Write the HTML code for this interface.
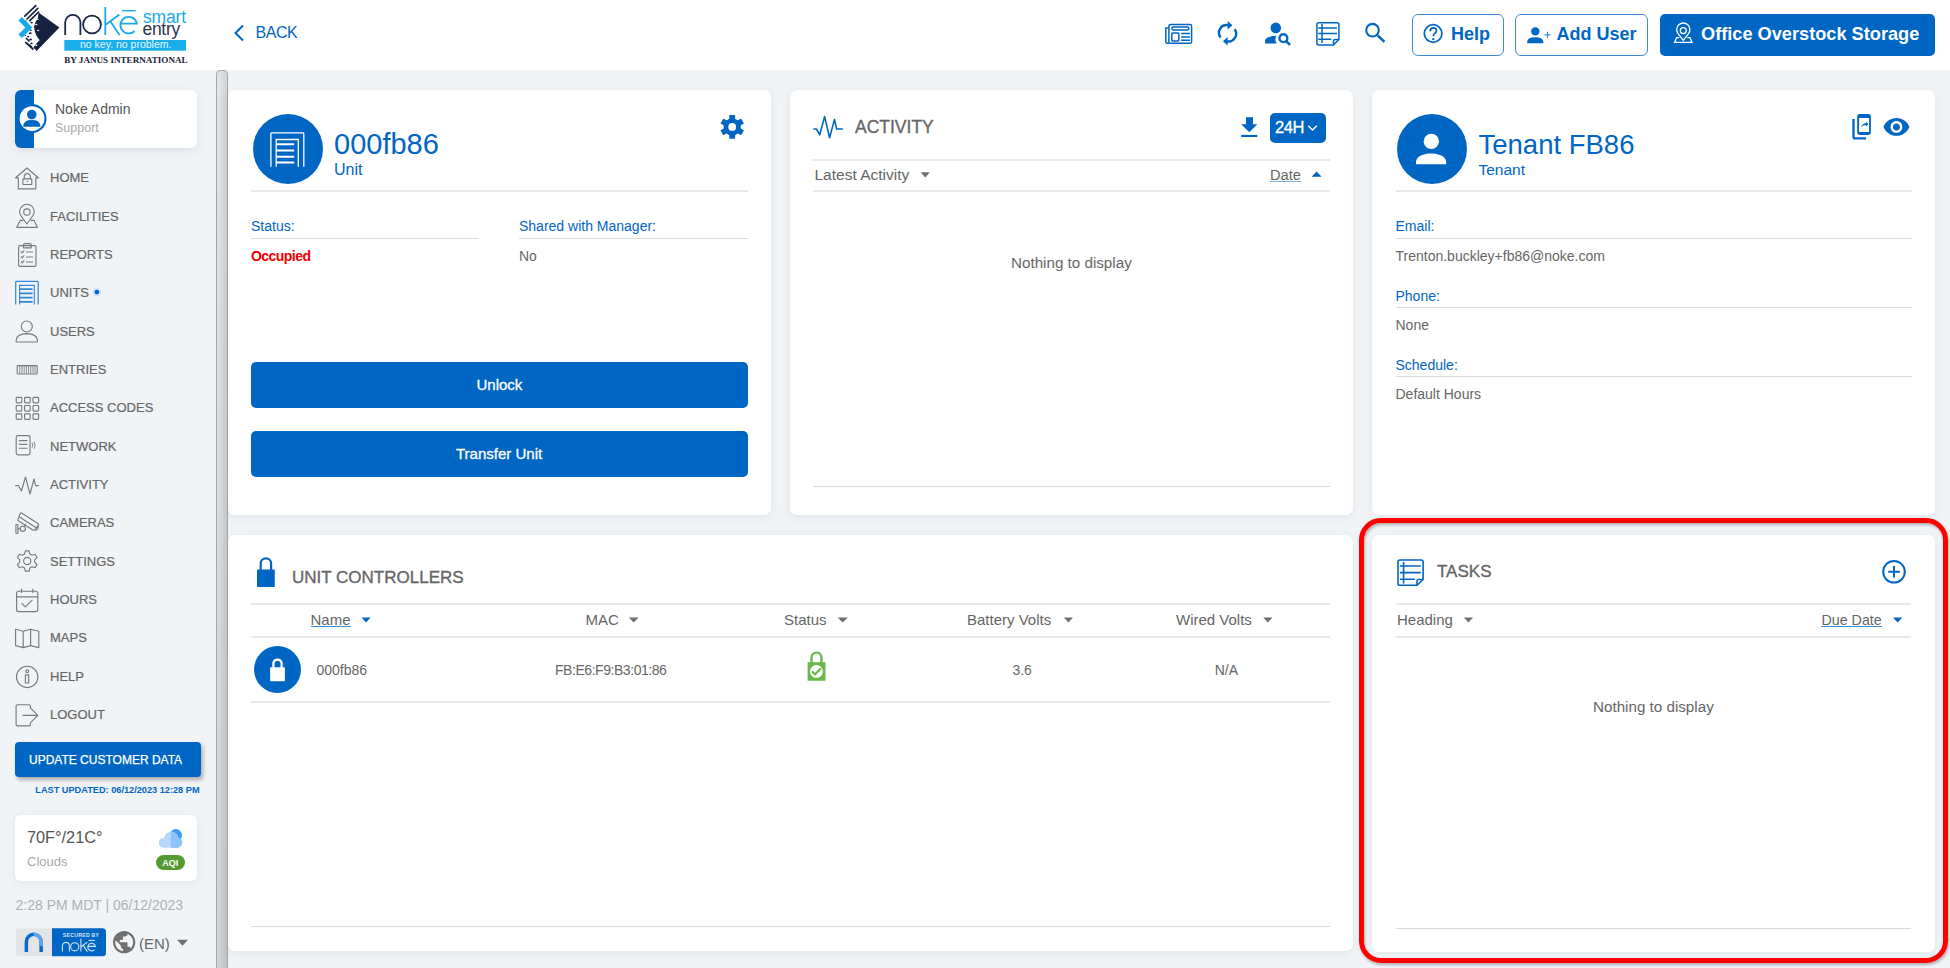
<!DOCTYPE html>
<html><head><meta charset="utf-8">
<style>
*{box-sizing:border-box;margin:0;padding:0}
html,body{width:1950px;height:968px;overflow:hidden;background:#f1f4f7;font-family:"Liberation Sans",sans-serif;color:#666}
.a{position:absolute}
.t{position:absolute;line-height:1;white-space:nowrap}
.card{position:absolute;background:#fff;border-radius:7px;box-shadow:0 2px 8px rgba(40,60,90,.08)}
.hdr{position:absolute;left:0;top:0;width:1950px;height:70px;background:#fff}
.blue{color:#0066c4}
.nav{position:absolute;left:50px;font-size:13px;color:#666;line-height:1;white-space:nowrap;-webkit-text-stroke:0.2px #666}
.hl{position:absolute;height:1px;background:#e6e8eb}
.lbl{font-size:14px;color:#0066c4}
.val{font-size:14px;color:#666}
.btn{position:absolute;background:#0066c4;border-radius:5px;color:#fff}
svg{position:absolute;overflow:visible}
</style></head><body>
<!-- HEADER -->
<div class="hdr"></div>
<!-- sidebar scrollbar -->
<div class="a" style="left:216px;top:70px;width:12px;height:900px;border-radius:4px 4px 0 0;background:linear-gradient(rgba(0,0,0,0),rgba(0,0,0,.08)),linear-gradient(to right,#e6e6e6,#d2d2d2);border:1px solid #a5a5a5"></div>

<!-- BACK -->
<svg style="left:233px;top:24px" width="12" height="18" viewBox="0 0 12 18"><path d="M10 1.5 L2.5 9 L10 16.5" fill="none" stroke="#0066c4" stroke-width="2"/></svg>
<div class="t blue" style="left:255.6px;top:25.35px;font-size:16px;letter-spacing:-0.5px">BACK</div>

<!-- header buttons -->
<div class="a" style="left:1412px;top:14px;width:92px;height:42px;border:1.2px solid #3f8ad6;border-radius:6px"></div>
<div class="t blue" style="left:1451px;top:24.7px;font-size:18px;font-weight:bold">Help</div>
<div class="a" style="left:1515px;top:14px;width:133px;height:42px;border:1.2px solid #3f8ad6;border-radius:6px"></div>
<div class="t blue" style="left:1556.5px;top:24.7px;font-size:18px;font-weight:bold">Add User</div>
<div class="btn" style="left:1660px;top:14px;width:275px;height:42px"></div>
<div class="t" style="left:1701px;top:24.7px;font-size:18.2px;font-weight:bold;color:#fff">Office Overstock Storage</div>

<!-- SIDEBAR -->
<div class="card" style="left:15px;top:90px;width:182px;height:58px;border-radius:6px;box-shadow:0 3px 10px rgba(40,60,90,.10)"></div>
<div class="a" style="left:15px;top:90px;width:19px;height:58px;background:#0066c4;border-radius:6px 0 0 6px"></div>
<div class="t" style="left:55px;top:102px;font-size:14px;color:#555">Noke Admin</div>
<div class="t" style="left:55px;top:122.3px;font-size:12.5px;color:#aaa">Support</div>

<div class="nav" style="top:171.1px">HOME</div>
<div class="nav" style="top:209.5px">FACILITIES</div>
<div class="nav" style="top:247.8px">REPORTS</div>
<div class="nav" style="top:286.2px">UNITS</div>
<div class="nav" style="top:324.6px">USERS</div>
<div class="nav" style="top:362.9px">ENTRIES</div>
<div class="nav" style="top:401.3px">ACCESS CODES</div>
<div class="nav" style="top:439.6px">NETWORK</div>
<div class="nav" style="top:478.0px">ACTIVITY</div>
<div class="nav" style="top:516.4px">CAMERAS</div>
<div class="nav" style="top:554.7px">SETTINGS</div>
<div class="nav" style="top:593.1px">HOURS</div>
<div class="nav" style="top:631.4px">MAPS</div>
<div class="nav" style="top:669.8px">HELP</div>
<div class="nav" style="top:708.1px">LOGOUT</div>

<div class="btn" style="left:15px;top:742px;width:186px;height:35px;border-radius:4px;box-shadow:2px 3px 4px rgba(0,0,0,.3)"></div>
<div class="t" style="left:29px;top:753.5px;font-size:12px;color:#fff;-webkit-text-stroke:0.25px #fff">UPDATE CUSTOMER DATA</div>
<div class="t blue" style="left:35.3px;top:785.7px;font-size:9.2px;font-weight:bold">LAST UPDATED: 06/12/2023 12:28 PM</div>

<div class="card" style="left:15px;top:815px;width:182px;height:66px;border-radius:6px;box-shadow:0 2px 8px rgba(40,60,90,.08)"></div>
<div class="t" style="left:27px;top:828.7px;font-size:16.3px;color:#555">70F°/21C°</div>
<div class="t" style="left:27px;top:854.6px;font-size:13px;color:#aaa">Clouds</div>
<div class="a" style="left:156px;top:854.8px;width:29px;height:15.3px;border-radius:8px;background:#559a31"></div>
<div class="t" style="left:162.3px;top:858.7px;font-size:9px;font-weight:bold;color:#fff">AQI</div>
<div class="t" style="left:15.5px;top:897.8px;font-size:14px;color:#b0b0b0">2:28 PM MDT | 06/12/2023</div>
<div class="t" style="left:139px;top:935.7px;font-size:15px;color:#666">(EN)</div>

<!-- CARDS -->
<div class="card" style="left:228px;top:90px;width:543px;height:425px"></div>
<div class="card" style="left:790px;top:90px;width:563px;height:425px"></div>
<div class="card" style="left:1372px;top:90px;width:563px;height:425px"></div>
<div class="card" style="left:228px;top:535px;width:1125px;height:416px"></div>
<div class="card" style="left:1372px;top:535px;width:563px;height:417px"></div>

<!-- CARD 1 -->
<div class="a" style="left:252.5px;top:113.8px;width:70px;height:70px;border-radius:50%;background:#0066c4"></div>
<div class="t blue" style="left:334px;top:130.3px;font-size:29px">000fb86</div>
<div class="t blue" style="left:334px;top:161.8px;font-size:16px">Unit</div>
<div class="hl" style="left:251px;top:190px;width:497px;height:2px"></div>
<div class="t lbl" style="left:251px;top:219.4px">Status:</div>
<div class="hl" style="left:251px;top:238px;width:228px;height:1px;background:#dadde0"></div>
<div class="t lbl" style="left:519px;top:219.4px">Shared with Manager:</div>
<div class="hl" style="left:519px;top:238px;width:229px;height:1px;background:#dadde0"></div>
<div class="t" style="left:251px;top:248.6px;font-size:14px;font-weight:bold;letter-spacing:-0.55px;color:#f00000">Occupied</div>
<div class="t val" style="left:519px;top:248.9px">No</div>
<div class="btn" style="left:251px;top:362px;width:497px;height:45.5px;border-radius:5px"></div>
<div class="t" style="left:476.5px;top:376.8px;font-size:15px;color:#fff;-webkit-text-stroke:0.3px #fff">Unlock</div>
<div class="btn" style="left:251px;top:431px;width:497px;height:45.5px;border-radius:5px"></div>
<div class="t" style="left:456px;top:446px;font-size:15px;color:#fff;-webkit-text-stroke:0.3px #fff">Transfer Unit</div>

<!-- CARD 2 ACTIVITY -->
<div class="t" style="left:855px;top:119.1px;font-size:17.5px;color:#666;-webkit-text-stroke:0.35px #666">ACTIVITY</div>
<div class="btn" style="left:1270px;top:113px;width:56px;height:30px;border-radius:5px"></div>
<div class="t" style="left:1275px;top:118.9px;font-size:16.5px;letter-spacing:-0.45px;color:#fff;-webkit-text-stroke:0.3px #fff">24H</div>
<div class="hl" style="left:813px;top:159px;width:517px;height:2px"></div>
<div class="t" style="left:814.5px;top:167.4px;font-size:15.5px">Latest Activity</div>
<div class="t" style="left:1270px;top:168.1px;font-size:14.7px">Date</div><div class="a" style="left:1270px;top:181px;width:31px;height:1px;background:#7fb2e5"></div>
<div class="hl" style="left:813px;top:190px;width:517px;height:2px"></div>
<div class="t" style="left:1011px;top:255.3px;font-size:15.2px">Nothing to display</div>
<div class="hl" style="left:813px;top:486px;width:517px;height:1px;background:#d9dcdf"></div>

<!-- CARD 3 TENANT -->
<div class="a" style="left:1397px;top:113.5px;width:70px;height:70px;border-radius:50%;background:#0066c4"></div>
<div class="t blue" style="left:1478.5px;top:131.2px;font-size:27.5px">Tenant FB86</div>
<div class="t blue" style="left:1478.5px;top:162.4px;font-size:15.5px">Tenant</div>
<div class="hl" style="left:1395.5px;top:190px;width:516px;height:2px"></div>
<div class="t lbl" style="left:1395.5px;top:219.1px">Email:</div>
<div class="hl" style="left:1395.5px;top:238px;width:516px;height:1px;background:#dadde0"></div>
<div class="t val" style="left:1395.5px;top:249.0px">Trenton.buckley+fb86@noke.com</div>
<div class="t lbl" style="left:1395.5px;top:288.7px">Phone:</div>
<div class="hl" style="left:1395.5px;top:307px;width:516px;height:1px;background:#dadde0"></div>
<div class="t val" style="left:1395.5px;top:317.5px">None</div>
<div class="t lbl" style="left:1395.5px;top:358px">Schedule:</div>
<div class="hl" style="left:1395.5px;top:376px;width:516px;height:1px;background:#dadde0"></div>
<div class="t val" style="left:1395.5px;top:387px">Default Hours</div>

<!-- CARD 4 UNIT CONTROLLERS -->
<div class="t" style="left:292px;top:569.2px;font-size:17px;color:#666;-webkit-text-stroke:0.35px #666">UNIT CONTROLLERS</div>
<div class="hl" style="left:251px;top:603px;width:1079px;height:2px"></div>
<div class="t" style="left:310.5px;top:612.3px;font-size:15px">Name</div><div class="a" style="left:310.5px;top:626px;width:40px;height:1px;background:#3f8ed8"></div>
<div class="t" style="left:585.5px;top:612.3px;font-size:15px">MAC</div>
<div class="t" style="left:784px;top:612.3px;font-size:15px">Status</div>
<div class="t" style="left:967px;top:612.3px;font-size:15px">Battery Volts</div>
<div class="t" style="left:1176px;top:612.3px;font-size:15px">Wired Volts</div>
<div class="hl" style="left:251px;top:635.5px;width:1079px;height:2px"></div>
<div class="a" style="left:253.8px;top:646px;width:47px;height:47px;border-radius:50%;background:#0066c4"></div>
<div class="t" style="left:316.4px;top:662.9px;font-size:14px">000fb86</div>
<div class="t" style="left:555px;top:662.9px;font-size:14px;letter-spacing:-0.45px">FB:E6:F9:B3:01:86</div>
<div class="t" style="left:1012.4px;top:662.9px;font-size:14px">3.6</div>
<div class="t" style="left:1214.7px;top:662.9px;font-size:14px">N/A</div>
<div class="hl" style="left:251px;top:701px;width:1079px;height:2px"></div>
<div class="hl" style="left:251px;top:926px;width:1079px;height:1px;background:#d9dcdf"></div>

<!-- CARD 5 TASKS -->
<div class="t" style="left:1437px;top:563.3px;font-size:17px;color:#666;-webkit-text-stroke:0.35px #666">TASKS</div>
<div class="hl" style="left:1395.5px;top:603px;width:515.5px;height:2px"></div>
<div class="t" style="left:1397px;top:612.3px;font-size:15px">Heading</div>
<div class="t" style="left:1821.4px;top:612.9px;font-size:14.3px">Due Date</div><div class="a" style="left:1821.4px;top:626px;width:60.5px;height:1px;background:#3f8ed8"></div>
<div class="hl" style="left:1395.5px;top:635.5px;width:515.5px;height:2px"></div>
<div class="t" style="left:1593px;top:699.3px;font-size:15.2px">Nothing to display</div>
<div class="hl" style="left:1396px;top:928px;width:515px;height:1px;background:#d9dcdf"></div>

<!-- LOGO -->
<svg style="left:0;top:0" width="200" height="70" viewBox="0 0 200 70">
  <path d="M38.5 12.5 L59.4 27.4 L36.6 51 L33.5 47.5 L36 44 L39.5 40 L36.5 36 L35 32 L34 27 L35.5 22 L38 18 Z" fill="#17223f"/>
  <g stroke="#17223f" stroke-width="1.7" stroke-linecap="round" fill="none">
    <path d="M24.8 16.2 L35.8 5.6 M27 19 L37.8 8.4 M29.8 20.6 L38.6 12"/>
    <path d="M26.5 38.5 L29 41 M25.8 42.5 L33 49 M28.5 44.5 L31.5 47"/>
  </g>
  <g fill="#17223f">
    <ellipse cx="27.2" cy="24.2" rx="1.2" ry="0.8"/><ellipse cx="29.5" cy="27.6" rx="1.4" ry="0.9"/><ellipse cx="26.8" cy="31" rx="1" ry="0.7"/>
    <ellipse cx="30.2" cy="33.2" rx="1.5" ry="1"/><ellipse cx="28.2" cy="36.6" rx="1.2" ry="0.8"/><ellipse cx="30.6" cy="39.5" rx="1.4" ry="0.9"/>
    <ellipse cx="31.6" cy="22.6" rx="1.3" ry="0.9"/><ellipse cx="30.8" cy="30.2" rx="1" ry="0.8"/><ellipse cx="25.3" cy="35.5" rx="0.8" ry="0.6"/>
    <ellipse cx="31.5" cy="43.4" rx="1.2" ry="0.9"/><ellipse cx="25.8" cy="21" rx="0.8" ry="0.6"/>
  </g>
  <g fill="#fff">
    <ellipse cx="36.3" cy="24.5" rx="1.1" ry="0.7"/><ellipse cx="38.2" cy="30.5" rx="1" ry="0.7"/><ellipse cx="36" cy="36.5" rx="1.2" ry="0.8"/>
    <ellipse cx="38.4" cy="40.6" rx="0.9" ry="0.6"/><ellipse cx="36.4" cy="45.2" rx="1" ry="0.7"/><ellipse cx="38" cy="19.5" rx="0.8" ry="0.6"/>
  </g>
  <path d="M20.2 18.8 L28.8 27.5 L20.2 36.2" fill="none" stroke="#19a9e8" stroke-width="5"/>
  <g fill="none" stroke-width="1.8">
    <path d="M65.2 35 V22.5 A7.6 7.6 0 0 1 80.4 22.5 V35" stroke="#1a2745"/>
    <circle cx="92" cy="24.5" r="8.9" stroke="#1a2745"/>
    <path d="M105.3 7 V35 M119.3 14.5 L106 24.5 M110.5 21.5 L119.5 35" stroke="#19a9e8"/>
    <path d="M120.6 23.6 H136.9 A8.3 8.3 0 1 0 134.6 31" stroke="#19a9e8"/>
    <path d="M122 10.7 H135.7" stroke="#19a9e8" stroke-width="1.4"/>
  </g>
  <rect x="64.3" y="40" width="121.7" height="10.7" fill="#18aeea"/>
</svg>
<div class="t" style="left:143px;top:8.7px;font-size:17.5px;letter-spacing:-0.15px;color:#19a9e8">smart</div>
<div class="t" style="left:142.5px;top:21.4px;font-size:17.5px;letter-spacing:-0.3px;color:#2b3550">entry</div>
<div class="t" style="left:80px;top:39.4px;font-size:10.5px;color:#e9f7fd">no key. no problem.</div>
<div class="t" style="left:64.3px;top:55.7px;font-size:9.1px;font-family:'Liberation Serif',serif;font-weight:bold;color:#1b2238">BY JANUS INTERNATIONAL</div>

<!-- ICON OVERLAY -->
<svg style="left:0;top:0" width="1950" height="968" viewBox="0 0 1950 968">
<g fill="none" stroke="#0066c4">
  <!-- newspaper -->
  <g stroke-width="1.5">
    <rect x="1168.9" y="24.6" width="22.7" height="18.7" rx="1.6"/>
    <path d="M1168.9 27.9 H1165.8 V41.8 Q1165.8 43.3 1167.3 43.3 H1169"/>
    <rect x="1171.8" y="27" width="17.1" height="2.9" rx="1.4"/>
    <rect x="1171.8" y="32.9" width="7" height="8" rx="0.8"/>
    <path d="M1181.2 33.6 H1190 M1181.2 36.9 H1190 M1181.2 40.3 H1190"/>
  </g>
  <!-- refresh -->
  <g stroke-width="2.4">
    <path d="M1220.6 37.4 A7.6 7.6 0 0 1 1228.2 25.3"/>
    <path d="M1234.6 29.3 A7.6 7.6 0 0 1 1227 41.3"/>
  </g>
  <!-- search -->
  <circle cx="1372.5" cy="30.2" r="6.3" stroke-width="2.1"/>
  <path d="M1377.6 35.4 L1384.4 41.9" stroke-width="2.6"/>
  <!-- notes header -->
  <g stroke-width="1.5">
    <path d="M1333.5 44.9 H1318.8 Q1316.9 44.9 1316.9 43 V24.6 Q1316.9 22.7 1318.8 22.7 H1337 Q1338.9 22.7 1338.9 24.6 V39.5 Z"/>
    <path d="M1338.9 39.5 H1335 Q1333.5 39.5 1333.5 41 V44.9"/>
    <path d="M1318.2 27.9 H1337 M1318.2 33.5 H1337 M1318.2 39.3 H1331.4 M1322 24.1 V42.9"/>
  </g>
  <!-- help circle -->
  <circle cx="1433.1" cy="33.5" r="8.8" stroke-width="1.8"/>
  <path d="M1430.2 31.2 Q1430.3 27.8 1433.4 27.8 Q1436.5 27.8 1436.5 30.6 Q1436.5 32.4 1434.5 33.6 Q1433.3 34.5 1433.3 36.2" stroke-width="1.7"/>
  <circle cx="1433.3" cy="39.1" r="1.2" fill="#0066c4" stroke="none"/>
  <!-- add user plus -->
  <path d="M1547.5 31.8 V38 M1544.4 34.9 H1550.6" stroke-width="1.2" stroke="#3f8ad6"/>
  <!-- activity pulse -->
  <path d="M813.4 129 H816.4 L819.8 134.8 L824.6 116.6 L829.6 137.8 L834.5 119.4 L836.6 129 H842.9" stroke-width="1.6" stroke-linejoin="round"/>
  <!-- tasks icon -->
  <g stroke-width="1.6">
    <path d="M1417 585.3 H1399.9 Q1398 585.3 1398 583.4 V561.9 Q1398 560 1399.9 560 H1421.2 Q1423.1 560 1423.1 561.9 V579.5 Z"/>
    <path d="M1423.1 579.5 H1418.6 Q1417 579.5 1417 581.1 V585.3"/>
    <path d="M1399.9 566 H1420.8 M1399.9 572.6 H1420.8 M1399.9 579.2 H1414.8 M1403.6 562.1 V583.4"/>
  </g>
  <!-- plus circle -->
  <circle cx="1894" cy="571.8" r="10.8" stroke-width="2"/>
  <path d="M1894 566 V577.6 M1888.2 571.8 H1899.8" stroke-width="2"/>
  <!-- 24H chevron -->
  <path d="M1308.3 125.7 L1312.5 130 L1316.8 125.7" stroke="#fff" stroke-width="1.4"/>
  <!-- card4 lock shackle -->
  <path d="M260.7 570 V563.5 A5.2 5.2 0 0 1 271.1 563.5 V570" stroke-width="2.2"/>
  <!-- row lock shackle -->
  <path d="M273.4 668 V663 A4.2 4.2 0 0 1 281.6 663 V668" stroke="#fff" stroke-width="2.2"/>
  <!-- green lock shackle -->
  <path d="M811.5 663 V657.6 A4.5 4.5 0 0 1 821.5 657.6 V663" stroke="#68b94a" stroke-width="2.4"/>
  <path d="M812 671.4 L815 674.3 L820.8 668.3" stroke="#68b94a" stroke-width="1.8"/>
  <!-- share phone L -->
  <path d="M1853.5 119 V137 Q1853.5 138.4 1855 138.4 H1866" stroke-width="2.3"/>
  <!-- location pin in office -->
  <g stroke="#fff" stroke-width="1.3">
    <path d="M1683.3 40.3 L1678.2 33.8 A6.6 6.6 0 1 1 1688.4 33.8 Z"/>
    <circle cx="1683.3" cy="30.6" r="3"/>
    <path d="M1679.2 37.6 H1676.6 L1674.6 42.4 H1692 L1690 37.6 H1687.4"/>
  </g>
</g>
<g fill="#0066c4">
  <polygon points="1227.6,20.9 1232.4,25.3 1227.6,29.6"/>
  <polygon points="1227.6,37 1222.9,41.3 1227.6,45.6"/>
  <!-- user search -->
  <circle cx="1275.8" cy="27.9" r="5.3"/>
  <path d="M1265.1 43.6 V40.5 Q1265.6 36.2 1276.4 35.7 Q1274.2 40 1276.8 43.6 Z"/>
  <circle cx="1283.4" cy="38.2" r="3.9" fill="none" stroke="#0066c4" stroke-width="2.4"/>
  <path d="M1286.2 41.2 L1290 44.9" stroke="#0066c4" stroke-width="2.6"/>
  <!-- add user -->
  <circle cx="1535.3" cy="31.4" r="4.2"/>
  <path d="M1527.2 43.3 V41.5 Q1527.6 37.2 1535.3 37.2 Q1543 37.2 1543.3 41.5 V43.3 Z"/>
  <!-- gear -->
  <g transform="translate(732.2 126.9)">
    <circle r="8.6"/>
    <rect x="-2.9" y="-11.9" width="5.8" height="23.8" rx="0.6"/>
    <rect x="-2.9" y="-11.9" width="5.8" height="23.8" rx="0.6" transform="rotate(60)"/>
    <rect x="-2.9" y="-11.9" width="5.8" height="23.8" rx="0.6" transform="rotate(120)"/>
    <circle r="3.9" fill="#fff"/>
  </g>
  <!-- download -->
  <rect x="1246" y="117.2" width="7" height="7.6"/>
  <polygon points="1241.2,124.2 1257.3,124.2 1249.3,132.2"/>
  <rect x="1241.2" y="134.9" width="16.1" height="2.1"/>
  <!-- door icon card1 -->
  <g fill="none" stroke="#fff">
    <path d="M270.9 166.8 V133.7 Q270.9 132.9 271.7 132.9 H303 Q303.8 132.9 303.8 133.7 V166.8" stroke-width="1.3"/>
    <path d="M276.2 166.8 V139.5 H298.3 V166.8" stroke-width="1.3"/>
    <path d="M276.2 144.3 H294.2 M276.2 150.5 H294.2 M276.2 156.7 H294.2 M276.2 162.5 H294.2" stroke-width="2"/>
  </g>
  <!-- tenant person -->
  <circle cx="1431.3" cy="141.4" r="7.7" fill="#fff"/>
  <path d="M1416 164.3 V162 C1416 156 1424 153.4 1431.1 153.4 C1438.2 153.4 1446.2 156 1446.2 162 V164.3 Z" fill="#fff"/>
  <!-- eye -->
  <path transform="translate(1882.3 112.8) scale(1.18)" d="M12 4.5C7 4.5 2.73 7.61 1 12c1.73 4.39 6 7.5 11 7.5s9.27-3.11 11-7.5c-1.73-4.39-6-7.5-11-7.5zM12 17c-2.76 0-5-2.24-5-5s2.24-5 5-5 5 2.24 5 5-2.24 5-5 5zm0-8c-1.66 0-3 1.34-3 3s1.34 3 3 3 3-1.34 3-3-1.34-3-3-3z"/>
  <!-- share phone -->
  <path fill-rule="evenodd" d="M1859.6 114.1 H1868.5 Q1870.9 114.1 1870.9 116.5 V132.6 Q1870.9 135 1868.5 135 H1859.6 Q1857.2 135 1857.2 132.6 V116.5 Q1857.2 114.1 1859.6 114.1 Z M1859.1 118 V132 H1869.1 V118 Z"/>
  <path d="M1861 127.2 Q1862.5 123.5 1866 123.3 V121.6 L1868.3 124.2 L1866 126.6 V124.9 Q1863 124.9 1861 127.2 Z"/>
  <!-- card4 lock body -->
  <rect x="257" y="569.5" width="17.8" height="17.6" rx="0.8"/>
  <!-- row lock body -->
  <rect x="270.1" y="667.3" width="14.8" height="13.9" rx="0.6" fill="#fff"/>
  <!-- carets -->
  <polygon points="920.7,172.3 929.8,172.3 925.25,177.4" fill="#6f6f6f"/>
  <polygon points="1311.6,176.8 1321.6,176.8 1316.6,171.4"/>
  <polygon points="361.5,617.5 370.6,617.5 366,622.5"/>
  <polygon points="628.8,617.5 638.6,617.5 633.7,622.5" fill="#6f6f6f"/>
  <polygon points="837.6,617.5 847.8,617.5 842.7,622.5" fill="#6f6f6f"/>
  <polygon points="1063.9,617.5 1073,617.5 1068.45,622.5" fill="#6f6f6f"/>
  <polygon points="1263.2,617.5 1272.5,617.5 1267.85,622.5" fill="#6f6f6f"/>
  <polygon points="1463.8,617.5 1473.1,617.5 1468.45,622.5" fill="#6f6f6f"/>
  <polygon points="1893,617.5 1902.3,617.5 1897.65,622.5"/>
</g>
<!-- green lock body with check -->
<path fill="#68b94a" fill-rule="evenodd" d="M807.6 662.2 H825.5 V680.8 H807.6 Z M816.4 665 A6.5 6.5 0 1 0 816.4 678 A6.5 6.5 0 1 0 816.4 665 Z"/>
<path d="M812.2 671.6 L815 674.4 L820.8 668.4" fill="none" stroke="#68b94a" stroke-width="1.8"/>
</svg>

<!-- SIDEBAR ICONS -->
<svg style="left:0;top:0" width="230" height="968" viewBox="0 0 230 968">
  <!-- admin avatar -->
  <circle cx="32" cy="118.55" r="14.5" fill="#0066c4"/>
  <circle cx="32" cy="118.55" r="12.4" fill="#fff"/>
  <circle cx="31.8" cy="114.6" r="4.8" fill="#0066c4"/>
  <path d="M23.3 126.8 V125.5 Q23.6 119.9 31.8 119.9 Q40 119.9 40.3 125.5 V126.8 Z" fill="#0066c4"/>
  <g fill="none" stroke="#7a7a7a" stroke-width="1.15" stroke-linejoin="round">
    <!-- home -->
    <path d="M15.6 177.8 L26.9 168 L38.3 177.8 H35.8 V188.8 H18.3 V177.8 Z"/>
    <rect x="22.9" y="178.9" width="8.9" height="5.6" rx="0.6"/>
    <path d="M24.3 178.9 V176.6 A3 3 0 0 1 30.3 176.6 V178.9"/>
    <circle cx="27.3" cy="181.6" r="0.8" fill="#7a7a7a" stroke="none"/>
    <!-- facilities -->
    <path d="M26.9 224 L21.5 216.5 A7.3 7.3 0 1 1 32.3 216.5 Z"/>
    <circle cx="26.9" cy="212" r="3.2"/>
    <path d="M23.2 220.3 H20.3 L16.8 227.3 H37.3 L34 220.3 H30.6"/>
    <!-- reports -->
    <rect x="18.6" y="245.6" width="17.4" height="20.7" rx="1.6"/>
    <path d="M23.5 247.8 V245 Q23.5 243.6 25 243.6 H29.8 Q31.2 243.6 31.2 245 V247.8 Z"/>
    <path d="M21 251.5 L22.2 252.8 L24.3 250.3 M21 256.5 L22.2 257.8 L24.3 255.3 M21 261.5 L22.2 262.8 L24.3 260.3 M26 252 H33 M26 257 H33 M26 262 H33"/>
    <!-- users -->
    <circle cx="26.8" cy="326.5" r="5.5"/>
    <path d="M16.2 342 V340 Q16.6 334 26.8 333.6 Q37 334 37.4 340 V342 Z"/>
    <!-- entries -->
    <rect x="17.2" y="365.6" width="20" height="8.4" rx="0.8"/>
    <path d="M19.8 366 V373.6 M22 366 V373.6 M24.2 366 V373.6 M26.4 366 V373.6 M28.6 366 V373.6 M30.8 366 V373.6 M33 366 V373.6 M35 366 V373.6" stroke-width="0.9"/>
    <!-- access codes -->
    <rect x="16.2" y="397.3" width="5.6" height="5.6" rx="0.8"/><rect x="24.6" y="397.3" width="5.6" height="5.6" rx="0.8"/><rect x="33" y="397.3" width="5.6" height="5.6" rx="0.8"/>
    <rect x="16.2" y="405.5" width="5.6" height="5.6" rx="0.8"/><rect x="24.6" y="405.5" width="5.6" height="5.6" rx="0.8"/><rect x="33" y="405.5" width="5.6" height="5.6" rx="0.8"/>
    <rect x="16.2" y="413.8" width="5.6" height="5.6" rx="0.8"/><rect x="24.6" y="413.8" width="5.6" height="5.6" rx="0.8"/><rect x="33" y="413.8" width="5.6" height="5.6" rx="0.8"/>
    <!-- network -->
    <rect x="16.2" y="435.6" width="13.8" height="19.2" rx="1.8"/>
    <path d="M18.8 440.6 H27.4 M18.8 444.4 H27.4 M18.8 448.2 H27.4"/>
    <path d="M32 442.6 Q33.6 445.2 32 447.8 M34 441.6 Q36.2 445.2 34 448.8" stroke-width="0.9"/>
    <!-- activity -->
    <path d="M15.2 485.6 H18.4 L21.4 491 L25.5 477 L30 494 L34 479 L35.6 485.6 H38.8"/>
    <!-- cameras -->
    <path d="M21.6 512.9 L38 523.5 Q38.9 524.1 38.4 525 L37.1 527.2 Q36.6 528 35.8 527.5 L19.5 517 Q18.7 516.5 19.2 515.6 L20.5 513.3 Q20.9 512.5 21.6 512.9 Z"/>
    <path d="M19 517.2 L17.9 519.5 Q17.5 520.3 18.3 520.8 L32.8 530 Q33.6 530.5 34.3 529.9 L36.4 527.9"/>
    <path d="M36.6 527.6 L38.3 525.6 L37.9 528.6 L35.2 530.8"/>
    <rect x="15.9" y="524.5" width="2" height="9" rx="0.5"/>
    <path d="M17.9 528.8 H20.1 M24.3 526.3 L25.6 524"/>
    <circle cx="22.8" cy="528.8" r="2.6"/>
    <!-- settings -->
    <path d="M25.3 550.9 H29.1 L29.8 553.9 L32.2 555.3 L35.1 554.3 L37 557.6 L34.7 559.6 V562.4 L37 564.4 L35.1 567.7 L32.2 566.7 L29.8 568.1 L29.1 571.1 H25.3 L24.6 568.1 L22.2 566.7 L19.3 567.7 L17.4 564.4 L19.7 562.4 V559.6 L17.4 557.6 L19.3 554.3 L22.2 555.3 L24.6 553.9 Z"/>
    <circle cx="27.2" cy="561" r="3.6"/>
    <!-- hours -->
    <rect x="16.6" y="591.2" width="21.2" height="20.4" rx="2"/>
    <path d="M16.6 596.8 H37.8 M21.5 588.8 V593 M32.9 588.8 V593 M21.6 603.2 L25.3 606.8 L32.4 599.8"/>
    <!-- maps -->
    <path d="M15.6 629.2 L23.2 631.2 L30.6 629.2 L38.8 631.2 V647.6 L30.6 645.6 L23.2 647.6 L15.6 645.6 Z M23.2 631.2 V647.6 M30.6 629.2 V645.6"/>
    <!-- help -->
    <circle cx="27.2" cy="676.9" r="10.7"/>
    <circle cx="27.2" cy="671.3" r="1.4"/>
    <path d="M25.4 674.8 H28.7 V683 H25.4 Z"/>
    <!-- logout -->
    <path d="M30.4 708.6 V706.1 Q30.4 704.7 29 704.7 H17.5 Q16.1 704.7 16.1 706.1 V724.5 Q16.1 725.9 17.5 725.9 H29 Q30.4 725.9 30.4 724.5 V722.4"/>
    <path d="M22.3 715.4 H37.8 M30.6 708.2 L37.8 715.4 L30.6 722.6"/>
  </g>
  <!-- units door (active blue) -->
  <g fill="none" stroke="#2f88da">
    <path d="M15.7 304.6 V282.2 Q15.7 281.4 16.5 281.4 H37.4 Q38.2 281.4 38.2 282.2 V304.6" stroke-width="1.2"/>
    <path d="M19.6 304.6 V285.4 H34.3 V304.6" stroke-width="1.1"/>
    <path d="M19.6 289.2 H32.6 M19.6 293.4 H32.6 M19.6 297.6 H32.6 M19.6 301.8 H32.6" stroke-width="1.7"/>
  </g>
  <circle cx="96.9" cy="292.1" r="4.4" fill="#d6e6f6"/>
  <circle cx="96.9" cy="292.1" r="2.4" fill="#0066c4"/>
  <!-- cloud -->
  <circle cx="175.8" cy="835.3" r="6.2" fill="#3d9bf6"/>
  <g fill="#b5d8fc">
    <circle cx="163.6" cy="842.8" r="4.9"/><circle cx="171.3" cy="838.8" r="7.1"/><rect x="163.6" y="842" width="7.2" height="5.7"/>
  </g>
  <path d="M170.8 831.7 A7.1 7.1 0 0 1 177.9 838.8 L177.9 837.2 A5.3 5.3 0 0 1 176.5 847.7 H170.8 Z" fill="#8ec4fa"/>
  <circle cx="176.5" cy="842.4" r="5.3" fill="#8ec4fa"/>
  <rect x="170.8" y="838.8" width="5.7" height="8.9" fill="#8ec4fa"/>
  <!-- bottom logos -->
  <rect x="16" y="928.5" width="40" height="27.4" rx="3" fill="#e3e4e6"/>
  <path d="M52 928.3 H102.5 Q106 928.3 106 931.8 V952.7 Q106 956.2 102.5 956.2 H52 Z" fill="#0066c4"/>
  <path d="M26.35 951.9 V941.65 A7.4 7.4 0 0 1 41.15 941.65 V951.9" fill="none" stroke="#0a6bcc" stroke-width="3.5"/>
  <path d="M33.75 934.25 A7.4 7.4 0 0 1 41.15 941.65 V946" fill="none" stroke="#5ba6ea" stroke-width="3.5"/>
  <g transform="translate(62 951.6) scale(0.46) translate(-64.3 -35)" fill="none" stroke="#d3e6f8" stroke-width="2.3">
    <path d="M65.2 35 V22.5 A7.6 7.6 0 0 1 80.4 22.5 V35"/>
    <circle cx="92" cy="24.5" r="8.9"/>
    <path d="M105.3 7 V35 M119.3 14.5 L106 24.5 M110.5 21.5 L119.5 35"/>
    <path d="M120.6 23.6 H136.9 A8.3 8.3 0 1 0 134.6 31"/>
    <path d="M122 10.7 H135.7"/>
  </g>
  <!-- globe -->
  <path transform="translate(110.8 928.8) scale(1.115)" fill="#707070" d="M12 2C6.48 2 2 6.48 2 12s4.48 10 10 10 10-4.48 10-10S17.52 2 12 2zm-1 17.93c-3.95-.49-7-3.85-7-7.93 0-.62.08-1.21.21-1.79L9 15v1c0 1.1.9 2 2 2v1.93zm6.9-2.54c-.26-.81-1-1.39-1.9-1.39h-1v-3c0-.55-.45-1-1-1H8v-2h2c.55 0 1-.45 1-1V7h2c1.1 0 2-.9 2-2v-.41c2.93 1.19 5 4.06 5 7.41 0 2.08-.8 3.97-2.1 5.39z"/>
  <polygon points="177,939.7 188,939.7 182.5,945.7" fill="#6f6f6f"/>
</svg>
<div class="t" style="left:62.8px;top:932.8px;font-size:5.2px;font-weight:bold;color:#d7e7f7;letter-spacing:0.25px">SECURED BY</div>


<!-- RED OUTLINE -->
<div class="a" style="left:1359px;top:518px;width:589px;height:445px;border:5px solid #ff0000;border-radius:22px;box-shadow:1px 2px 3px rgba(0,0,0,.28), inset 1px 2px 3px rgba(0,0,0,.28)"></div>

</body></html>
